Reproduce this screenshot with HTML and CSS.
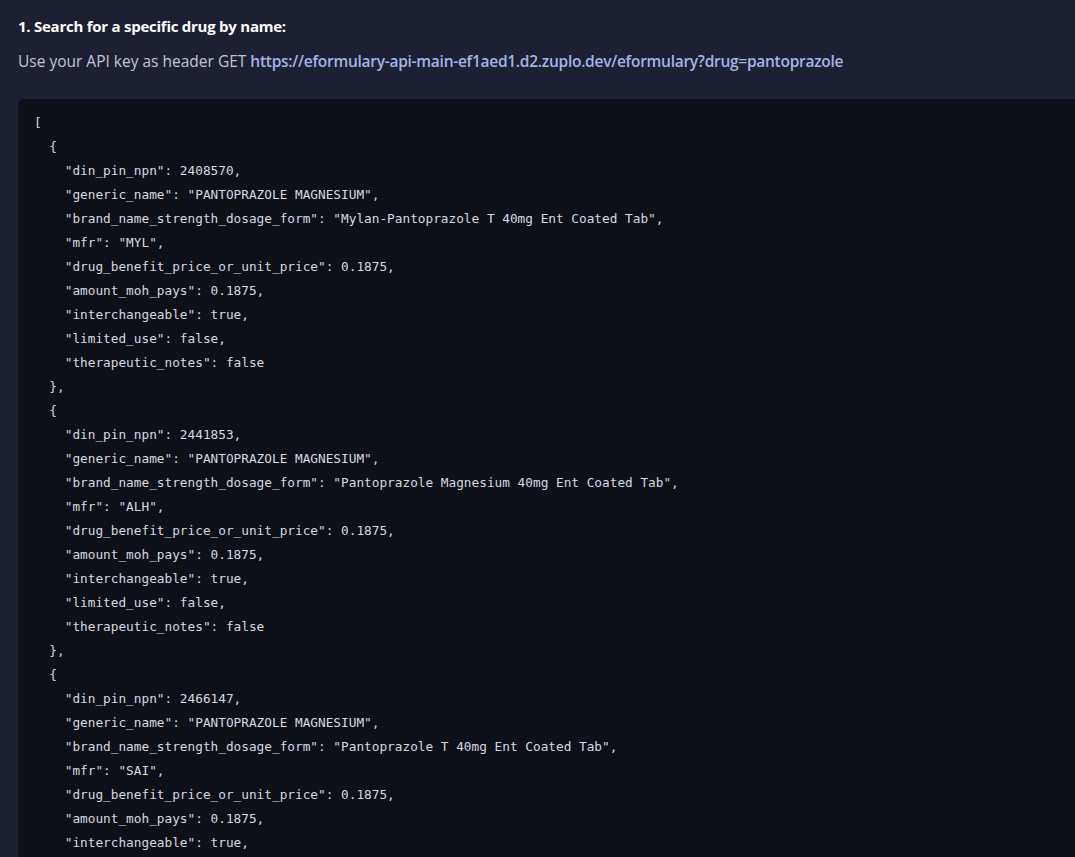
FILE: index.html
```html
<!DOCTYPE html>
<html>
<head>
<meta charset="utf-8">
<link rel="stylesheet" href="styles.css">
</head>
<body>
<main class="doc">
  <h3 class="title">1. Search for a specific drug by name:</h3>
  <p class="desc">Use your API key as header GET <a class="link" href="#">https://eformulary-api-main-ef1aed1.d2.zuplo.dev/eformulary?drug=pantoprazole</a></p>
  <pre class="code">[
  {
    "din_pin_npn": 2408570,
    "generic_name": "PANTOPRAZOLE MAGNESIUM",
    "brand_name_strength_dosage_form": "Mylan-Pantoprazole T 40mg Ent Coated Tab",
    "mfr": "MYL",
    "drug_benefit_price_or_unit_price": 0.1875,
    "amount_moh_pays": 0.1875,
    "interchangeable": true,
    "limited_use": false,
    "therapeutic_notes": false
  },
  {
    "din_pin_npn": 2441853,
    "generic_name": "PANTOPRAZOLE MAGNESIUM",
    "brand_name_strength_dosage_form": "Pantoprazole Magnesium 40mg Ent Coated Tab",
    "mfr": "ALH",
    "drug_benefit_price_or_unit_price": 0.1875,
    "amount_moh_pays": 0.1875,
    "interchangeable": true,
    "limited_use": false,
    "therapeutic_notes": false
  },
  {
    "din_pin_npn": 2466147,
    "generic_name": "PANTOPRAZOLE MAGNESIUM",
    "brand_name_strength_dosage_form": "Pantoprazole T 40mg Ent Coated Tab",
    "mfr": "SAI",
    "drug_benefit_price_or_unit_price": 0.1875,
    "amount_moh_pays": 0.1875,
    "interchangeable": true,
    "limited_use": false,
    "therapeutic_notes": false
  }
]</pre>
</main>
</body>
</html>
```

FILE: styles.css
```css
html, body {
  margin: 0;
  padding: 0;
  background: #1d2033;
  height: 100%;
  overflow: hidden;
}
.doc {
  padding: 14px 0 0 18px;
  font-family: "Open Sans", "Noto Sans", sans-serif;
}
.title {
  margin: 0;
  font-size: 15px;
  font-weight: 700;
  line-height: 24px;
  letter-spacing: -0.25px;
  color: #ffffff;
}
.desc {
  margin: 11px 0 0 0;
  font-size: 15.5px;
  line-height: 24px;
  color: #c2c6d2;
}
.link {
  color: #a5b4e6;
  font-weight: 600;
  letter-spacing: -0.27px;
  text-decoration: none;
}
.code {
  margin: 26px 0 0 0;
  padding: 12px 16px 16px 16px;
  background: #0d1017;
  border-radius: 6px 0 0 0;
  font-family: "DejaVu Sans Mono", "Liberation Mono", monospace;
  font-size: 12.75px;
  line-height: 24px;
  color: #d5d9e0;
  width: 1200px;
}
```
